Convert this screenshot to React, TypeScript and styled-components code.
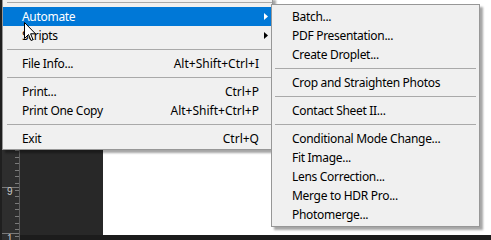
import styled, { createGlobalStyle } from "styled-components";

const GlobalStyle = createGlobalStyle`
  html, body {
    margin: 0;
    padding: 0;
    background: #262626;
    overflow: hidden;
  }
  body {
    font-family: "Noto Sans", "Open Sans", sans-serif;
    font-size: 12px;
  }
`;

type Entry =
  | { kind: "item"; label: string; shortcut?: string; sub?: boolean; active?: boolean }
  | { kind: "sep" };

const fileMenu: Entry[] = [
  { kind: "item", label: "Automate", sub: true, active: true },
  { kind: "item", label: "Scripts", sub: true },
  { kind: "sep" },
  { kind: "item", label: "File Info...", shortcut: "Alt+Shift+Ctrl+I" },
  { kind: "sep" },
  { kind: "item", label: "Print...", shortcut: "Ctrl+P" },
  { kind: "item", label: "Print One Copy", shortcut: "Alt+Shift+Ctrl+P" },
  { kind: "sep" },
  { kind: "item", label: "Exit", shortcut: "Ctrl+Q" },
];

const automateMenu: Entry[] = [
  { kind: "item", label: "Batch..." },
  { kind: "item", label: "PDF Presentation..." },
  { kind: "item", label: "Create Droplet..." },
  { kind: "sep" },
  { kind: "item", label: "Crop and Straighten Photos" },
  { kind: "sep" },
  { kind: "item", label: "Contact Sheet II..." },
  { kind: "sep" },
  { kind: "item", label: "Conditional Mode Change..." },
  { kind: "item", label: "Fit Image..." },
  { kind: "item", label: "Lens Correction..." },
  { kind: "item", label: "Merge to HDR Pro..." },
  { kind: "item", label: "Photomerge..." },
];

const Stage = styled.div`
  position: relative;
  width: 491px;
  height: 240px;
  display: grid;
  grid-template-columns: 20px 83px 1fr;
  grid-template-rows: 235px 5px;
  background: #1c1c1c;
  overflow: hidden;
`;

const RulerCol = styled.div`
  grid-row: 1 / 3;
  grid-column: 1;
  background: #2e2e2e;
  border-left: 2px solid #1f1f1f;
  box-sizing: border-box;
  position: relative;
`;

const DarkArea = styled.div`
  grid-row: 1;
  grid-column: 2;
  background: #282828;
`;

const Canvas = styled.div`
  grid-row: 1;
  grid-column: 3;
  background: #ffffff;
`;

const Menu = styled.div<{ $left: number; $top: number; $width: number; $padTop: number; $padBottom: number }>`
  position: absolute;
  left: ${(p) => p.$left}px;
  top: ${(p) => p.$top}px;
  width: ${(p) => p.$width}px;
  box-sizing: border-box;
  background: #f0f0f0;
  border: 1px solid #979797;
  padding: ${(p) => p.$padTop}px 0 ${(p) => p.$padBottom}px;
  box-shadow: 3px 3px 2px rgba(0, 0, 0, 0.35);
  color: #000;
`;

const Row = styled.div<{ $active?: boolean; $indent: number }>`
  display: flex;
  align-items: center;
  height: 19px;
  padding-left: ${(p) => p.$indent}px;
  background: ${(p) => (p.$active ? "#0078d7" : "transparent")};
  color: ${(p) => (p.$active ? "#ffffff" : "#000000")};
  white-space: nowrap;
`;

const Label = styled.span`
  flex: 1;
  letter-spacing: -0.3px;
`;

const Shortcut = styled.span`
  text-align: right;
`;

const ArrowSlot = styled.span`
  width: 13px;
  display: flex;
  align-items: center;
  justify-content: flex-start;
  padding-left: 5px;
  box-sizing: border-box;
`;

const Separator = styled.div<{ $height: number; $inset: number; $right: number }>`
  height: ${(p) => p.$height}px;
  display: flex;
  align-items: center;
  padding: 0 ${(p) => p.$right}px 0 ${(p) => p.$inset}px;
  &::after {
    content: "";
    flex: 1;
    height: 1px;
    background: #a9a9a9;
  }
`;

const Cursor = styled.svg`
  position: absolute;
  left: 24px;
  top: 22px;
`;

const Ruler = () => {
  const ticks: number[] = [];
  for (let y = 150; y < 240; y += 6.6) ticks.push(Math.round(y));
  return (
    <svg width="18" height="240" style={{ position: "absolute", left: 0, top: 0 }}>
      <line x1="17.5" y1="0" x2="17.5" y2="240" stroke="#5e5e5e" />
      {ticks.map((y) => (
        <line key={y} x1="13" y1={y + 0.5} x2="17" y2={y + 0.5} stroke="#7a7a7a" />
      ))}
      <line x1="0" y1="187.5" x2="17" y2="187.5" stroke="#7a7a7a" />
      <line x1="0" y1="233.5" x2="17" y2="233.5" stroke="#7a7a7a" />
      <text x="5" y="195" fontSize="10" fill="#c8c8c8" fontFamily="Liberation Sans, sans-serif">9</text>
      <text x="5" y="242" fontSize="10" fill="#c8c8c8" fontFamily="Liberation Sans, sans-serif">1</text>
    </svg>
  );
};

const SubArrow = ({ color }: { color: string }) => (
  <svg width="4" height="7" viewBox="0 0 4 7">
    <polygon points="0,0 4,3.5 0,7" fill={color} />
  </svg>
);

const MenuList = ({ entries, indent, sepInset, sepRight, sepHeight }: { entries: Entry[]; indent: number; sepInset: number; sepRight: number; sepHeight: number }) => (
  <>
    {entries.map((e, i) =>
      e.kind === "sep" ? (
        <Separator key={i} $height={sepHeight} $inset={sepInset} $right={sepRight} />
      ) : (
        <Row key={i} $active={e.active} $indent={indent}>
          <Label>{e.label}</Label>
          {e.shortcut && <Shortcut>{e.shortcut}</Shortcut>}
          <ArrowSlot>{e.sub && <SubArrow color={e.active ? "#fff" : "#000"} />}</ArrowSlot>
        </Row>
      )
    )}
  </>
);

export default function App() {
  return (
    <>
      <GlobalStyle />
      <Stage>
        <RulerCol>
          <Ruler />
        </RulerCol>
        <DarkArea />
        <Canvas />

        <Menu $left={2} $top={-3} $width={271} $padTop={0} $padBottom={1}>
          <Separator $height={9} $inset={4} $right={0} />
          <MenuList entries={fileMenu} indent={19} sepInset={4} sepRight={0} sepHeight={9} />
        </Menu>

        <Menu $left={271} $top={4} $width={209} $padTop={2} $padBottom={2}>
          <MenuList entries={automateMenu} indent={20} sepInset={3} sepRight={3} sepHeight={9} />
        </Menu>

        <Cursor width="12" height="20" viewBox="0 0 12 20">
          <path
            d="M0.5 0.5 L0.5 16.5 L4.5 12.5 L7 18.5 L9 17.7 L6.6 11.8 L11.5 11.8 Z"
            fill="#ffffff"
            stroke="#000000"
            strokeWidth="1"
            strokeLinejoin="miter"
          />
        </Cursor>
      </Stage>
    </>
  );
}
